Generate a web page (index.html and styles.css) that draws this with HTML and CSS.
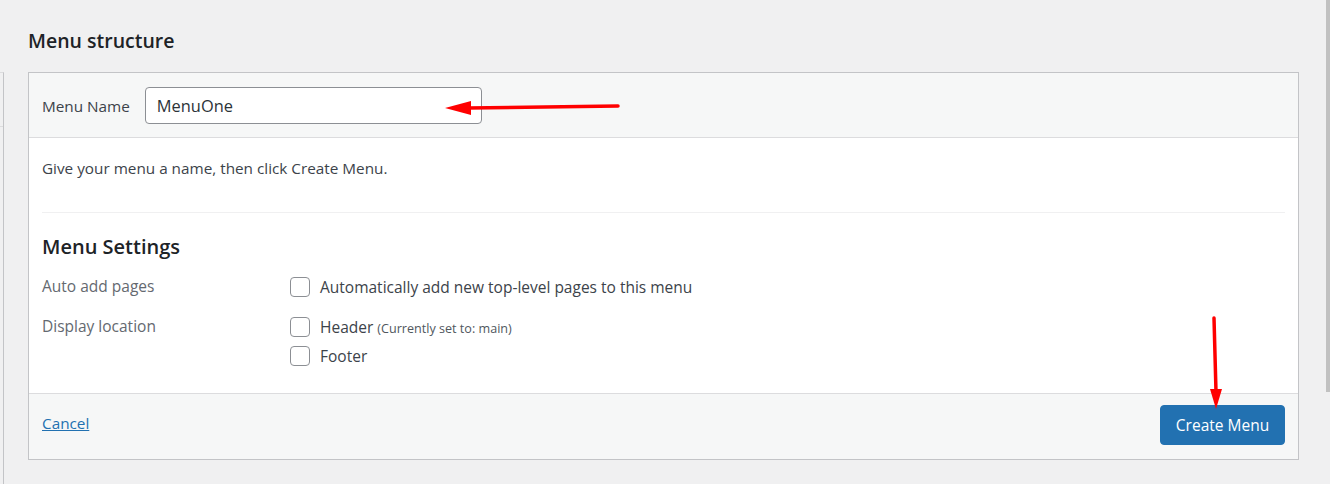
FILE: index.html
```html
<!DOCTYPE html>
<html>
<head>
<meta charset="utf-8">
<link rel="stylesheet" href="styles.css">
</head>
<body>
<div class="page">
  <div class="side">
    <div class="side-box"><div class="side-head"></div></div>
  </div>
  <main class="main">
    <h2 class="title">Menu structure</h2>
    <div class="box">
      <div class="box-head">
        <label class="name-label">Menu Name</label>
        <div class="input">MenuOne</div>
      </div>
      <div class="box-body">
        <p class="hint">Give your menu a name, then click Create Menu.</p>
        <div class="divider"></div>
        <h3 class="settings-title">Menu Settings</h3>
        <div class="row">
          <div class="row-label">Auto add pages</div>
          <div class="row-opts">
            <div class="opt"><span class="cb"></span><span>Automatically add new top-level pages to this menu</span></div>
          </div>
        </div>
        <div class="row row2">
          <div class="row-label">Display location</div>
          <div class="row-opts">
            <div class="opt"><span class="cb"></span><span>Header <small class="note">(Currently set to: main)</small></span></div>
            <div class="opt opt2"><span class="cb"></span><span>Footer</span></div>
          </div>
        </div>
      </div>
      <div class="box-foot">
        <a class="cancel" href="#">Cancel</a>
        <button class="btn">Create Menu</button>
      </div>
    </div>
  </main>
  <div class="scroll"><div class="thumb"></div></div>
</div>
<svg class="arrows" width="1330" height="484" viewBox="0 0 1330 484">
  <path d="M618 106 L468 108" stroke="#f00" stroke-width="3.5" stroke-linecap="round" fill="none"/>
  <path d="M445 108 L471 101 L471 115 Z" fill="#f00"/>
  <path d="M1214 318 L1216 392" stroke="#f00" stroke-width="3.5" stroke-linecap="round" fill="none"/>
  <path d="M1216 409 L1210 389 L1222 389 Z" fill="#f00"/>
</svg>
</body>
</html>
```
FILE: styles.css
```css
* { box-sizing: border-box; }
html, body { margin: 0; padding: 0; }
body {
  background: #f0f0f1;
  font-family: "Open Sans", "Noto Sans", sans-serif;
  color: #3c434a;
  width: 1330px;
  height: 484px;
  overflow: hidden;
}
.page {
  display: flex;
  height: 484px;
}
.side {
  width: 4px;
  padding-top: 72px;
}
.side-box {
  height: 100%;
  border-top: 1px solid #dcdcde;
  border-right: 1px solid #c3c4c7;
}
.side-head {
  height: 54px;
  border-bottom: 1px solid #dcdcde;
}
.main {
  flex: 1;
  padding-left: 24px;
  padding-right: 27px;
}
.title {
  margin: 0;
  padding-top: 27px;
  height: 72px;
  font-size: 19.5px;
  font-weight: 600;
  color: #1d2327;
  line-height: 28px;
}
.box {
  border: 1px solid #c3c4c7;
  background: #fff;
  height: 388px;
  display: flex;
  flex-direction: column;
}
.box-head {
  background: #f6f7f7;
  border-bottom: 1px solid #dcdcde;
  height: 65px;
  display: flex;
  align-items: center;
  padding: 0 13px;
  gap: 15px;
}
.name-label {
  font-size: 15.3px;
  color: #3c434a;
  padding-top: 1px;
}
.input {
  width: 337px;
  height: 37px;
  border: 1px solid #8c8f94;
  border-radius: 4px;
  background: #fff;
  font-size: 16.4px;
  color: #2c3338;
  padding: 0 11px;
  line-height: 35px;
}
.box-body {
  flex: 1;
  padding: 0 13px;
}
.hint {
  margin: 0;
  padding-top: 19px;
  font-size: 15.3px;
  line-height: 22px;
  height: 74px;
}
.divider {
  height: 1px;
  background: #f0f0f1;
}
.settings-title {
  margin: 0;
  padding-top: 20px;
  font-size: 20px;
  font-weight: 600;
  color: #1d2327;
  line-height: 28px;
  height: 62px;
}
.row {
  display: flex;
}
.row2 {
  margin-top: 16px;
}
.row-label {
  width: 248px;
  font-size: 15.5px;
  color: #646970;
  line-height: 22px;
  padding-top: 0;
}
.row-opts {
  display: flex;
  flex-direction: column;
}
.opt {
  display: flex;
  align-items: center;
  gap: 10px;
  font-size: 15.5px;
  color: #3c434a;
  height: 24px;
}
.opt2 { margin-top: 5px; }
.cb {
  width: 20px;
  height: 20px;
  border: 1px solid #8c8f94;
  border-radius: 4px;
  background: #fff;
  flex: none;
}
.note {
  font-size: 12.6px;
  color: #50575e;
}
.box-foot {
  background: #f6f7f7;
  border-top: 1px solid #dcdcde;
  height: 66px;
  display: flex;
  align-items: center;
  justify-content: space-between;
  padding: 0 13px 4px 13px;
}
.cancel {
  color: #2271b1;
  font-size: 15.3px;
  text-decoration: underline;
  margin-bottom: 4px;
}
.btn {
  background: #2271b1;
  color: #fff;
  border: 1px solid #2271b1;
  border-radius: 4px;
  height: 40px;
  width: 125px;
  font-family: inherit;
  font-size: 15.5px;
  padding: 0;
  margin-top: 0;
}
.scroll {
  width: 4px;
}
.thumb {
  height: 392px;
  background: #c1c1c1;
}
.arrows {
  position: absolute;
  left: 0;
  top: 0;
  pointer-events: none;
}
```
